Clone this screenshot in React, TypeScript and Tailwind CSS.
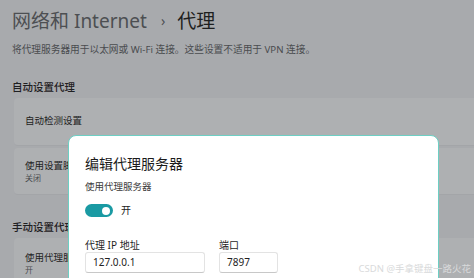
import React from "react";

const font = { fontFamily: '"Noto Sans", "Noto Sans CJK SC", sans-serif' };

export default function App() {
  return (
    <div
      className="relative w-[474px] h-[278px] overflow-hidden bg-[#a8aaad] text-[#222]"
      style={font}
    >
      <div className="pl-[12px] pt-[7px]">
        <div className="flex items-center h-[28px] text-[19px] leading-[28px]">
          <span className="text-[#4d4f52]">网络和 Internet</span>
          <span className="ml-[14px] mr-[12px] text-[14px] text-[#4d4f52]">›</span>
          <span className="text-[#1e1f20]">代理</span>
        </div>
        <div className="mt-[7px] text-[9.7px] leading-[16px] text-[#4a4c4f]">
          将代理服务器用于以太网或 Wi-Fi 连接。这些设置不适用于 VPN 连接。
        </div>
        <div className="mt-[21px] text-[10.5px] leading-[16px] font-medium text-[#1f2022]">
          自动设置代理
        </div>
        <div className="ml-[2px] mt-[3px] flex flex-col gap-[2px]">
          <div className="h-[48px] bg-[#aeb0b2] rounded-l-[4px] flex items-center pl-[11px] text-[9.5px] text-[#222] border-b border-[#a3a5a8]">
            自动检测设置
          </div>
          <div className="h-[47px] bg-[#aeb0b2] rounded-l-[4px] flex flex-col justify-center pl-[11px] border-b border-[#a3a5a8]">
            <div className="text-[9.5px] leading-[13px] text-[#222]">使用设置脚本</div>
            <div className="text-[8px] leading-[11px] text-[#4a4c4f]">关闭</div>
          </div>
        </div>
        <div className="mt-[24px] text-[10.5px] leading-[16px] font-medium text-[#1f2022]">
          手动设置代理
        </div>
        <div className="ml-[2px] mt-[3px] h-[60px] bg-[#aeb0b2] rounded-l-[4px] pl-[11px] pt-[13px]">
          <div className="text-[9.5px] leading-[13px] text-[#222]">使用代理服务器</div>
          <div className="text-[8px] leading-[11px] text-[#4a4c4f]">开</div>
        </div>
      </div>

      <div className="absolute left-[68px] top-[135px] w-[371px] h-[160px] bg-white border border-[#6dcfc4] rounded-[8px] pl-[16px] pt-[16px]">
        <div className="text-[14px] leading-[24px] text-[#1b1b1b]">编辑代理服务器</div>
        <div className="mt-[3px] text-[9.5px] leading-[16px] text-[#3a3a3a]">使用代理服务器</div>
        <div className="mt-[9px] flex items-center h-[13px]">
          <div className="w-[28px] h-[13px] rounded-full bg-[#1a9aa3] flex items-center justify-end pr-[3px]">
            <div className="w-[8px] h-[8px] rounded-full bg-white" />
          </div>
          <span className="ml-[8px] text-[10px] text-[#222]">开</span>
        </div>
        <div className="mt-[20px] flex gap-[14px]">
          <div className="flex flex-col">
            <div className="text-[10px] leading-[16px] text-[#1f1f1f]">代理 IP 地址</div>
            <div className="mt-[-1px] w-[120px] h-[21px] border border-[#e3e3e3] border-b-[#c8c8c8] rounded-[3px] flex items-center pl-[7px] text-[10px] text-[#222]">
              127.0.0.1
            </div>
          </div>
          <div className="flex flex-col">
            <div className="text-[10px] leading-[16px] text-[#1f1f1f]">端口</div>
            <div className="mt-[-1px] w-[59px] h-[21px] border border-[#e3e3e3] border-b-[#c8c8c8] rounded-[3px] flex items-center pl-[7px] text-[10px] text-[#222]">
              7897
            </div>
          </div>
        </div>
      </div>

      <div className="absolute right-[3px] bottom-[3px] text-[9.5px] leading-[12px] text-[#d9dadb]">
        CSDN @手拿键盘一路火花
      </div>
    </div>
  );
}
